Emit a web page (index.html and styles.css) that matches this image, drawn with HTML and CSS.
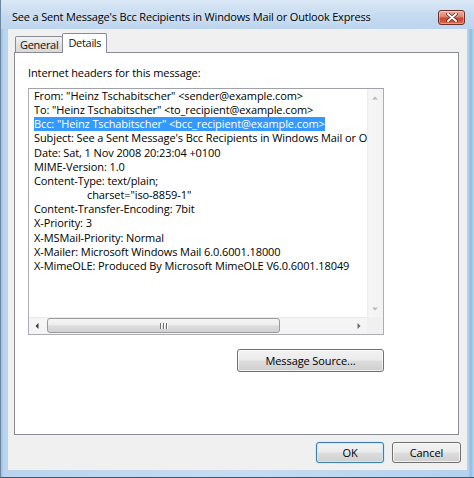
FILE: index.html
```html
<!DOCTYPE html>
<html lang="en">

<head>
    <meta charset="UTF-8">
    <meta name="viewport" content="width=device-width, initial-scale=1.0">
    <title>Message Properties</title>
    <link rel="stylesheet" href="styles.css">
</head>

<body>
    <div class="window">
        <div class="titlebar">
            <span class="titlebar__text">See a Sent Message's Bcc Recipients in Windows Mail or Outlook Express</span>
            <button class="close-button" title="Close">
                <svg width="12" height="9" viewBox="0 0 12 9">
                    <path d="M2 1 L10 8 M10 1 L2 8" stroke="#5a1c12" stroke-width="3.4" stroke-linecap="round" />
                    <path d="M2 1 L10 8 M10 1 L2 8" stroke="#fff" stroke-width="2" stroke-linecap="round" />
                </svg>
            </button>
        </div>

        <div class="client">
            <div class="tabs">
                <div class="tabs__item">General</div>
                <div class="tabs__item tabs__item--active">Details</div>
            </div>

            <div class="panel">
                <div class="panel__label">Internet headers for this message:</div>

                <div class="headers">
                    <div class="headers__text">
                        <div class="headers__line">From: "Heinz Tschabitscher" &lt;sender@example.com&gt;</div>
                        <div class="headers__line">To: "Heinz Tschabitscher" &lt;to_recipient@example.com&gt;</div>
                        <div class="headers__line"><span class="headers__selected">Bcc: "Heinz Tschabitscher" &lt;bcc_recipient@example.com&gt;</span></div>
                        <div class="headers__line">Subject: See a Sent Message's Bcc Recipients in Windows Mail or Outlook Express</div>
                        <div class="headers__line">Date: Sat, 1 Nov 2008 20:23:04 +0100</div>
                        <div class="headers__line">MIME-Version: 1.0</div>
                        <div class="headers__line">Content-Type: text/plain;</div>
                        <div class="headers__line headers__line--indent">charset="iso-8859-1"</div>
                        <div class="headers__line">Content-Transfer-Encoding: 7bit</div>
                        <div class="headers__line">X-Priority: 3</div>
                        <div class="headers__line">X-MSMail-Priority: Normal</div>
                        <div class="headers__line">X-Mailer: Microsoft Windows Mail 6.0.6001.18000</div>
                        <div class="headers__line">X-MimeOLE: Produced By Microsoft MimeOLE V6.0.6001.18049</div>
                    </div>

                    <div class="vscroll">
                        <div class="scroll-arrow scroll-arrow--up"></div>
                        <div class="scroll-arrow scroll-arrow--down"></div>
                    </div>

                    <div class="hscroll">
                        <div class="scroll-arrow scroll-arrow--left"></div>
                        <div class="hscroll__track">
                            <div class="hscroll__thumb">
                                <span class="grip"></span><span class="grip"></span><span class="grip"></span>
                            </div>
                        </div>
                        <div class="scroll-arrow scroll-arrow--right"></div>
                    </div>

                    <div class="headers__corner"></div>
                </div>

                <div class="panel__actions">
                    <button class="button button--source">Message Source...</button>
                </div>
            </div>

            <div class="footer">
                <button class="button button--default">OK</button>
                <button class="button">Cancel</button>
            </div>
        </div>
    </div>
</body>

</html>
```

FILE: styles.css
```css
* {
    margin: 0;
    padding: 0;
    box-sizing: border-box;
}

body {
    font-family: "Open Sans", "Noto Sans", sans-serif;
    font-size: 11px;
    letter-spacing: -0.1px;
    color: #000;
    background: #fff;
}

button {
    font-family: inherit;
    font-size: inherit;
    letter-spacing: inherit;
    color: inherit;
}

.window {
    display: flex;
    flex-direction: column;
    width: 474px;
    height: 478px;
    background: linear-gradient(90deg, #9fc2e4 0, #bad4ee 3px, #c6dcf1 50%, #b5d2ee calc(100% - 6px), #8dbde4 calc(100% - 3px), #bcd7ef 100%);
    border-left: 1px solid #6d86a0;
    border-bottom: 1px solid #44566a;
}

.titlebar {
    display: flex;
    align-items: center;
    height: 29px;
    padding: 0 9px 0 11px;
    background: linear-gradient(#dbe8f6, #c3d9f0 60%, #bdd5ee);
}

.titlebar__text {
    flex: 1;
    margin-top: 4px;
    white-space: nowrap;
    letter-spacing: -0.18px;
    text-shadow: 0 0 6px #eef5fc;
}

.close-button {
    display: flex;
    align-items: center;
    justify-content: center;
    width: 27px;
    height: 15px;
    margin-top: 5px;
    border: 1px solid #6b3027;
    border-radius: 3px;
    background: linear-gradient(#eab0a4 0, #dc8270 45%, #c9442d 55%, #d86a4e 100%);
    box-shadow: inset 0 0 0 1px rgba(255, 255, 255, 0.35);
}

.client {
    display: flex;
    flex-direction: column;
    flex: 1;
    margin: 0 7px 7px 7px;
    padding: 4px 6px 7px 6px;
    background: #f0f0f0;
}

.tabs {
    display: flex;
    align-items: flex-end;
    height: 19px;
    padding-left: 1px;
}

.tabs__item {
    height: 16px;
    padding: 0 4px;
    line-height: 15px;
    letter-spacing: -0.3px;
    border: 1px solid #898c95;
    border-bottom: none;
    border-radius: 2px 2px 0 0;
    background: linear-gradient(#f2f2f2, #e3e3e3 50%, #d9d9d9);
    color: #111;
}

.tabs__item--active {
    position: relative;
    z-index: 1;
    height: 20px;
    margin-left: -1px;
    margin-bottom: -1px;
    padding: 0 5px 0 5px;
    line-height: 17px;
    background: #fff;
}

.panel {
    display: flex;
    flex-direction: column;
    flex: 1;
    margin-right: 2px;
    padding: 12px 0 0 13px;
    border: 1px solid #898c95;
    background: #fff;
}

.panel__label {
    height: 16px;
    line-height: 16px;
}

.headers {
    display: grid;
    grid-template-columns: 1fr 16px;
    grid-template-rows: 1fr 17px;
    width: 356px;
    height: 247px;
    margin-top: 7px;
    border: 1px solid #abadb3;
    border-top-color: #9fa2aa;
}

.headers__text {
    padding: 0 0 0 5px;
    overflow: hidden;
    white-space: nowrap;
}

.headers__line {
    height: 14.17px;
    line-height: 14.17px;
}

.headers__line--indent {
    padding-left: 53px;
}

.headers__selected {
    display: inline-block;
    background: #3399ff;
    color: #fff;
}

.vscroll {
    display: flex;
    flex-direction: column;
    justify-content: space-between;
    background: linear-gradient(90deg, #e9e9e9, #f6f6f6 2px, #f3f3f3);
}

.hscroll {
    display: flex;
    align-items: center;
    background: linear-gradient(#e9e9e9, #f6f6f6 2px, #f3f3f3);
}

.hscroll__track {
    flex: 1;
    height: 100%;
    padding: 1px 71px 1px 2px;
}

.hscroll__thumb {
    display: flex;
    align-items: center;
    justify-content: center;
    gap: 2px;
    height: 100%;
    border: 1px solid #9a9a9a;
    border-radius: 3px;
    background: linear-gradient(#f7f7f7, #ececec 45%, #dcdcdc 55%, #d2d2d2);
}

.grip {
    width: 1px;
    height: 6px;
    background: #6f6f6f;
    box-shadow: 1px 0 0 #fff;
}

.headers__corner {
    background: #f0f0f0;
}

.scroll-arrow {
    position: relative;
    width: 16px;
    height: 17px;
}

.scroll-arrow::before {
    position: absolute;
    content: "";
    top: 50%;
    left: 50%;
    border: 3px solid transparent;
}

.scroll-arrow--up::before {
    transform: translate(-50%, -75%);
    border-bottom-color: #b9b9b9;
}

.scroll-arrow--down::before {
    transform: translate(-50%, -25%);
    border-top-color: #b9b9b9;
}

.scroll-arrow--left::before {
    transform: translate(-75%, -50%);
    border-right-color: #3c3c3c;
}

.scroll-arrow--right::before {
    transform: translate(-25%, -50%);
    border-left-color: #6a6a6a;
}

.panel__actions {
    display: flex;
    justify-content: flex-end;
    width: 356px;
    margin-top: 14px;
}

.button {
    width: 69px;
    height: 21px;
    border: 1px solid #707070;
    border-radius: 3px;
    background: linear-gradient(#f2f2f2, #ebebeb 48%, #dddddd 52%, #cfcfcf);
    box-shadow: inset 0 0 0 1px rgba(255, 255, 255, 0.7);
}

.button--source {
    width: 147px;
    height: 23px;
}

.button--default {
    width: 68px;
    border-color: #3c7fb1;
    box-shadow: inset 0 0 0 1px #c6eaf8, 0 0 1px #48a9d8;
}

.footer {
    display: flex;
    justify-content: flex-end;
    gap: 8px;
    margin-top: 7px;
}
```
